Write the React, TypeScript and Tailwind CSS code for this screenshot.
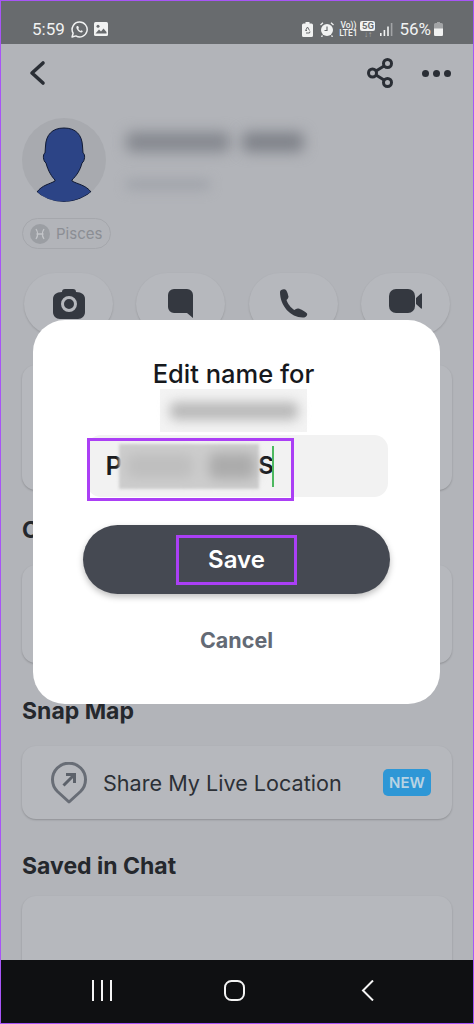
const FONT = "font-['Inter','Noto_Sans',sans-serif]";

function StatusBar() {
  return (
    <div className="h-[43px] shrink-0 bg-[#686b6e] flex items-end justify-between pl-[31px] pr-[30px] pb-[5px] text-[#f1f2f2]">
      <div className="flex items-center gap-[6px]">
        <span className="text-[17px] leading-[20px] font-['Roboto',sans-serif]">5:59</span>
        {/* whatsapp */}
        <svg width="17" height="17" viewBox="0 0 16 16" fill="none">
          <path d="M8 1a7 7 0 0 0-6 10.500L1 15l3.600-1A7 7 0 1 0 8 1Z" stroke="#f1f2f2" strokeWidth="1.400" strokeLinejoin="round" />
          <path d="M5.600 4.600c-.8.7-.8 2 .3 3.600 1.200 1.700 2.800 2.800 4 2.600.8-.1 1.300-.8 1.200-1.300L9.700 8.700l-.8.7c-.8-.3-1.600-1.200-2-2l.6-.8-.8-2Z" fill="#f1f2f2" />
        </svg>
        {/* gallery */}
        <svg width="14" height="14" viewBox="0 0 14 14">
          <rect width="14" height="14" rx="1.500" fill="#f1f2f2" />
          <circle cx="4" cy="4.200" r="1.500" fill="#686b6e" />
          <path d="M1.500 11.500 5 7.500l2 2 2.500-3 3 3.500v1.500Z" fill="#686b6e" />
        </svg>
      </div>
      <div className="flex items-center font-['Roboto',sans-serif]">
        {/* battery saver */}
        <svg width="11" height="15" viewBox="0 0 11 15">
          <path d="M3.500 0h4v1.500H9.500A1.500 1.500 0 0 1 11 3v10.500A1.500 1.500 0 0 1 9.500 15h-8A1.500 1.500 0 0 1 0 13.500V3a1.500 1.500 0 0 1 1.500-1.500h2Z" fill="#f1f2f2" />
          <path d="M5.500 5 3.500 8.500h1.500M5.500 5 7.500 8.500M4 11h3.500l.5-1.500" stroke="#686b6e" strokeWidth="1" fill="none" />
        </svg>
        {/* alarm */}
        <svg className="ml-[7px]" width="14" height="15" viewBox="0 0 14 15">
          <circle cx="7" cy="8" r="6" fill="#f1f2f2" />
          <path d="M7 4.500V8.500H4.500" stroke="#686b6e" strokeWidth="1.200" fill="none" />
          <path d="M.5 3 3 .8M13.500 3 11 .8M2.500 13.500l-1 1.300M11.500 13.500l1 1.300" stroke="#f1f2f2" strokeWidth="1.300" />
        </svg>
        <div className="ml-[5px] w-[18px] flex flex-col items-center text-[8.500px] leading-[8.500px] font-medium">
          <span>Vo))</span>
          <span>LTE1</span>
        </div>
        <div className="ml-[3px] w-[15px] flex flex-col items-center">
          <span className="bg-[#f1f2f2] text-[#686b6e] rounded-[2px] w-[15px] text-center text-[9.500px] leading-[10px] font-bold">5G</span>
          <span className="text-[8px] leading-[7px] text-[#a9abad]">↓↑</span>
        </div>
        {/* signal */}
        <svg className="ml-[5px]" width="13" height="13" viewBox="0 0 13 13">
          <rect x="0" y="10" width="1.600" height="3" fill="#f1f2f2" />
          <rect x="3.600" y="7" width="1.600" height="6" fill="#f1f2f2" />
          <rect x="7.200" y="3.500" width="1.600" height="9.500" fill="#f1f2f2" />
          <rect x="10.800" y="0" width="1.600" height="13" fill="#a2a4a6" />
        </svg>
        <span className="ml-[6px] text-[17px] leading-[20px]">56%</span>
        <svg className="ml-[3px]" width="9" height="14" viewBox="0 0 9 14">
          <path d="M3 0h3v1h1.500A1.500 1.500 0 0 1 9 2.500v10A1.500 1.500 0 0 1 7.500 14h-6A1.500 1.500 0 0 1 0 12.500v-10A1.500 1.500 0 0 1 1.500 1H3Z" fill="#a2a4a6" />
          <path d="M0 6.500h9v6A1.500 1.500 0 0 1 7.500 14h-6A1.500 1.500 0 0 1 0 12.500Z" fill="#f1f2f2" />
        </svg>
      </div>
    </div>
  );
}

function Avatar() {
  return (
    <div className="w-[84px] h-[84px] rounded-full bg-[#a8aaaf] overflow-hidden shrink-0">
      <svg width="84" height="84" viewBox="0 0 84 84">
        <path
          d="M42 10C30 10 24 17 23.500 28L23 35C20.500 36 21 43 24 45 26 53 30 59 33 62L33 63C28 66 20 67 15 74 22 81 32 84 41 84 50 84 60 81 69 74 64 67 55 66 50 63L50 62C54 58 58 53 60 45 63 43 63.500 36 61 35L60.500 28C60 17 54 10 42 10Z"
          fill="#2c4486"
          stroke="#111a33"
          strokeWidth="1"
        />
      </svg>
    </div>
  );
}

function ActionButton({ children }: { children: React.ReactNode }) {
  return (
    <div className="w-[89px] h-[62px] rounded-full bg-[#b6b8bd] shadow-[0_1px_2px_rgba(0,0,0,0.15)] flex justify-center pt-[16px]">
      {children}
    </div>
  );
}

function Card({ className, children }: { className: string; children?: React.ReactNode }) {
  return (
    <div className={`mx-[21px] rounded-[14px] bg-[#b6b8bd] shadow-[0_1px_2px_rgba(0,0,0,0.2)] ${className}`}>
      {children}
    </div>
  );
}

function Heading({ children, className }: { children: React.ReactNode; className: string }) {
  return <h2 className={`ml-[21px] text-[23px] leading-[28px] font-bold text-[#25282d] ${className}`}>{children}</h2>;
}

function ProfilePage() {
  return (
    <div className="flex-1 min-h-0 bg-[#b2b4b9] overflow-hidden">
      {/* top bar */}
      <div className="h-[58px] flex items-center justify-between pl-[27px] pr-[22px]">
        <svg width="18" height="26" viewBox="0 0 18 26" fill="none" stroke="#2a2e35" strokeWidth="3.600" strokeLinecap="round" strokeLinejoin="round">
          <path d="M15 3 4 13l11 10" />
        </svg>
        <div className="flex items-center gap-[29px]">
          <svg width="26" height="30" viewBox="0 0 26 30" fill="none" stroke="#2a2e35" strokeWidth="3">
            <circle cx="20.500" cy="5.500" r="4" />
            <circle cx="5.500" cy="15" r="4" />
            <circle cx="20.500" cy="24.500" r="4" />
            <path d="M9 13 17 8M9 17l8 5" />
          </svg>
          <div className="flex gap-[4px]">
            <span className="w-[7px] h-[7px] rounded-full bg-[#2a2e35]" />
            <span className="w-[7px] h-[7px] rounded-full bg-[#2a2e35]" />
            <span className="w-[7px] h-[7px] rounded-full bg-[#2a2e35]" />
          </div>
        </div>
      </div>

      {/* avatar + name */}
      <div className="flex pl-[21px] pt-[16px] gap-[20px]">
        <Avatar />
        <div className="pt-[14px]">
          <div className="flex gap-[12px]">
            <div className="w-[104px] h-[20px] rounded-[6px] bg-[#85888f] blur-[7px]" />
            <div className="w-[62px] h-[20px] rounded-[6px] bg-[#7f8289] blur-[7px]" />
          </div>
          <div className="mt-[27px] w-[84px] h-[11px] rounded-[4px] bg-[#a1a4ab] blur-[6px]" />
        </div>
      </div>

      {/* zodiac */}
      <div className="ml-[21px] mt-[16px] w-[89px] h-[31px] rounded-full border border-[#a5a7ac] flex items-center pl-[7px] gap-[6px]">
        <span className="w-[20px] h-[20px] rounded-full bg-[#9b9ea3] flex items-center justify-center">
          <svg width="12" height="12" viewBox="0 0 12 12" fill="none" stroke="#c3c5c9" strokeWidth="1.300">
            <path d="M2 1c2 3 2 7 0 10M10 1c-2 3-2 7 0 10M2.500 6h7" />
          </svg>
        </span>
        <span className="text-[15px] leading-[18px] text-[#8b8e94]">Pisces</span>
      </div>

      {/* actions */}
      <div className="mt-[24px] px-[23px] flex justify-between">
        <ActionButton>
          <svg width="34" height="30" viewBox="0 0 34 30">
            <path d="M10 3a3 3 0 0 1 3-3h8a3 3 0 0 1 3 3c6 0 9 3 9 7v13c0 4-3 7-7 7H8c-4 0-7-3-7-7V10c0-4 3-7 9-7Z" fill="#343840" />
            <circle cx="17" cy="15" r="6.500" fill="none" stroke="#b6b8bd" strokeWidth="3" />
          </svg>
        </ActionButton>
        <ActionButton>
          <svg width="25" height="29" viewBox="0 0 25 29">
            <path d="M6 0h13a6 6 0 0 1 6 6v23l-6-5H6a6 6 0 0 1-6-6V6a6 6 0 0 1 6-6Z" fill="#343840" />
          </svg>
        </ActionButton>
        <ActionButton>
          <svg width="29" height="29" viewBox="0 0 29 29">
            <path d="M1 3c0-2 3-3 5-2.500 2 .5 3 5 3.500 7 .2 1.500-1.500 3-2 3.500 1 3.500 4.500 8 8 10 1-.8 2.500-2 4-1.500 2 .5 7 3 8.500 5 .8 1.500-1 4-3.500 4C12 29 1 17 1 3Z" fill="#343840" />
          </svg>
        </ActionButton>
        <ActionButton>
          <svg width="33" height="24" viewBox="0 0 33 24">
            <path d="M7 0h12a7 7 0 0 1 7 7v10a7 7 0 0 1-7 7H7a7 7 0 0 1-7-7V7a7 7 0 0 1 7-7Z" fill="#343840" />
            <path d="M27 9l5-4.500a.6.600 0 0 1 1 .5v14a.6.600 0 0 1-1 .5L27 15Z" fill="#343840" />
          </svg>
        </ActionButton>
      </div>

      <Card className="mt-[30px] h-[125px]" />
      <Heading className="mt-[26px]">Charms</Heading>
      <Card className="mt-[21px] h-[98px]" />
      <Heading className="mt-[34px]">Snap Map</Heading>

      <Card className="mt-[21px] h-[73px] flex items-center pl-[29px] pr-[21px]">
        <svg width="36" height="42" viewBox="0 0 36 42" fill="none" className="shrink-0">
          <path d="M18 40 6.500 29.500A16.500 16.500 0 1 1 29.500 29.500Z" stroke="#686d76" strokeWidth="3" strokeLinejoin="round" />
          <path d="M12.500 23.500 22.500 13.500M15 12.500h8.500V21" stroke="#5c616a" strokeWidth="3" />
        </svg>
        <span className="ml-[16px] flex-1 text-[21.600px] leading-[28px] text-[#2c3036]">Share My Live Location</span>
        <span className="w-[48px] h-[27px] rounded-[5px] bg-[#2e97d6] text-[#b8d3e3] text-[15px] font-semibold leading-[27px] text-center">NEW</span>
      </Card>

      <Heading className="mt-[33px]">Saved in Chat</Heading>
      <Card className="mt-[16px] h-[100px] bg-[#b5b7bc]" />
    </div>
  );
}

function EditNameDialog() {
  return (
    <div className="absolute left-[32px] top-[319px] w-[407px] h-[384px] rounded-[32px] bg-white flex flex-col items-center pt-[39px]">
      <div className="mr-[6px] text-[25.500px] leading-[30px] font-medium text-[#16191d]">Edit name for</div>
      <div className="mr-[6px] w-[147px] h-[43px] bg-[#f3f3f3] flex items-center justify-center">
        <div className="w-[128px] h-[18px] rounded-[5px] bg-[#b8b8b8] blur-[6px]" />
      </div>

      <div className="relative mt-[3px] ml-[1px] w-[301px] h-[62px] rounded-[14px] bg-[#f2f2f2] flex items-center pl-[19px]">
        <span className="text-[26px] leading-[30px] font-semibold text-[#1a1c20]">P</span>
        <div className="w-[140px] h-[45px] bg-[#cdcdcd] blur-[1.500px] flex items-center gap-[16px] pl-[8px] shrink-0 ml-[-3px]">
          <div className="w-[66px] h-[24px] rounded-[6px] bg-[#bebebe] blur-[6px]" />
          <div className="w-[46px] h-[26px] rounded-[6px] bg-[#ababab] blur-[6px]" />
        </div>
        <span className="text-[24px] leading-[30px] font-semibold text-[#1a1c20] ml-[-1px]">S</span>
        <span className="w-[2.500px] h-[41px] bg-[#4db860] ml-[-2px]" />
        <div className="absolute left-0 top-[3px] w-[207px] h-[63px] border-[3px] border-[#ab3ff5]" />
      </div>

      <div className="relative mt-[28px] w-[307px] h-[69px] rounded-full bg-[#454952] shadow-[0_3px_6px_rgba(0,0,0,0.25)] flex items-center justify-center">
        <span className="text-[24px] leading-[30px] font-semibold text-white">Save</span>
        <div className="absolute left-[93px] top-[10px] w-[121px] h-[50px] border-[3px] border-[#ab3ff5]" />
      </div>

      <div className="mt-[31px] text-[21.500px] leading-[30px] font-bold text-[#636a75]">Cancel</div>
    </div>
  );
}

function NavBar() {
  return (
    <div className="h-[63px] shrink-0 bg-[#0f1012] flex items-center pb-[3px] pl-[91px]">
      <svg width="20" height="21" viewBox="0 0 20 21" stroke="#f4f4f4" strokeWidth="2">
        <path d="M1 0v21M10 0v21M19 0v21" />
      </svg>
      <svg className="ml-[112px]" width="21" height="21" viewBox="0 0 21 21" fill="none" stroke="#f4f4f4" strokeWidth="2">
        <rect x="1" y="1" width="19" height="19" rx="6.500" />
      </svg>
      <svg className="ml-[116px]" width="13" height="21" viewBox="0 0 13 21" fill="none" stroke="#f4f4f4" strokeWidth="2">
        <path d="M12 .5 2 10.500l10 10" />
      </svg>
    </div>
  );
}

export default function App() {
  return (
    <div className={`relative w-[474px] h-[1024px] overflow-hidden flex flex-col border border-[#a855f7] ${FONT}`}>
      <StatusBar />
      <ProfilePage />
      <NavBar />
      <EditNameDialog />
    </div>
  );
}
